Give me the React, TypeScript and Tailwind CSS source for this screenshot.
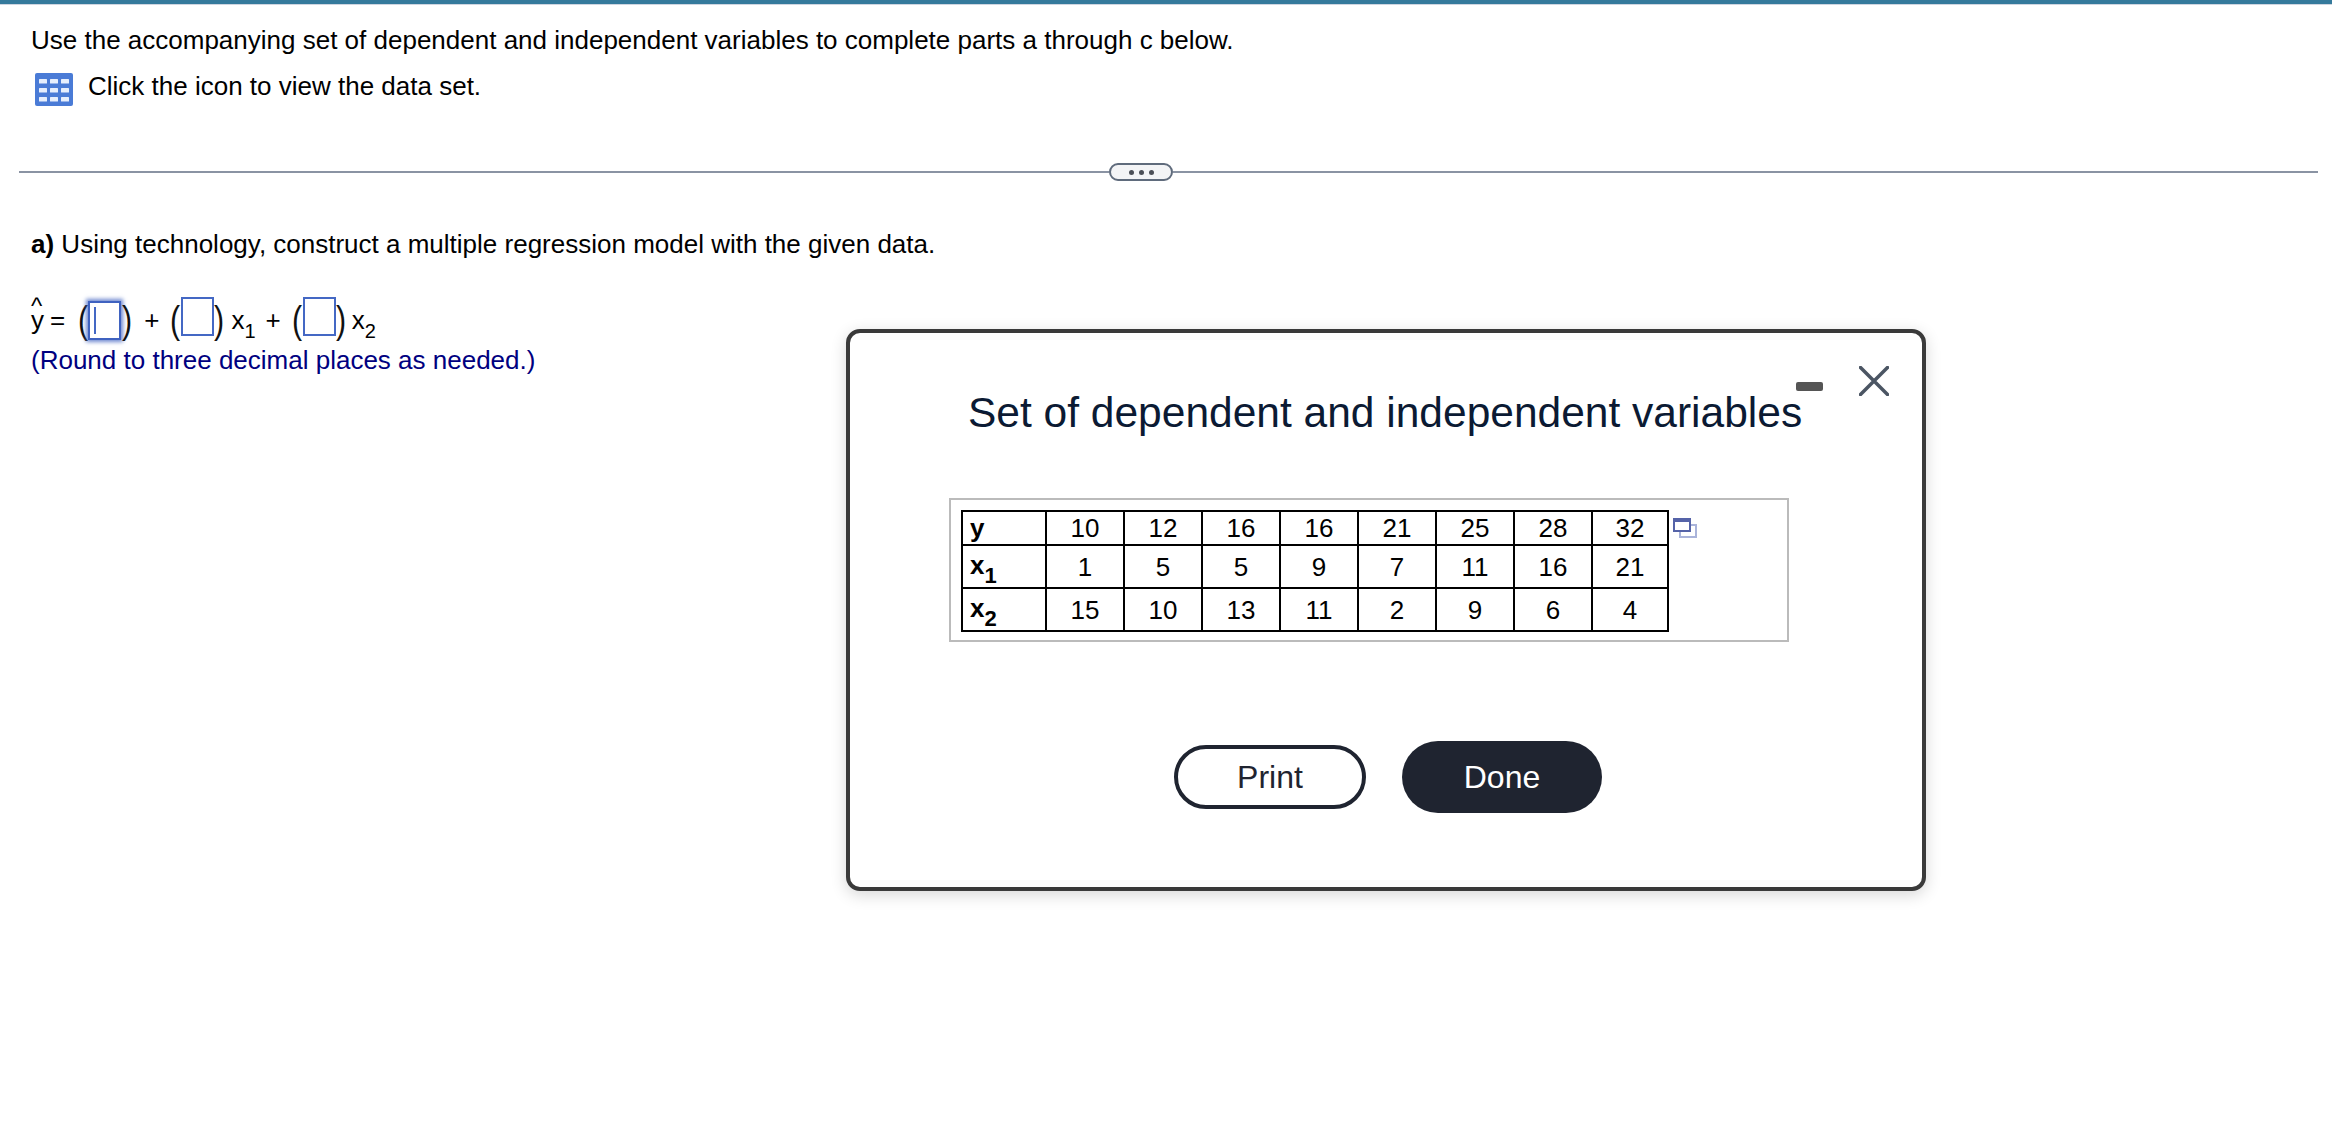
import React from "react";

const sans = "font-['Liberation_Sans',Arial,sans-serif]";

const rows = [
  { label: "y", sub: "", values: [10, 12, 16, 16, 21, 25, 28, 32], height: "h-[34px]" },
  { label: "x", sub: "1", values: [1, 5, 5, 9, 7, 11, 16, 21], height: "h-[43px]" },
  { label: "x", sub: "2", values: [15, 10, 13, 11, 2, 9, 6, 4], height: "h-[43px]" },
];

function GridIcon() {
  return (
    <svg width="38" height="33" viewBox="0 0 38 33" className="shrink-0">
      <rect x="0" y="0" width="38" height="33" rx="2" fill="#4a7bd6" />
      {[6, 15, 24].map((y) =>
        [4, 15, 26].map((x) => (
          <rect key={`${x}-${y}`} x={x} y={y} width="8" height="4.5" rx="0.5" fill="#e6eefc" />
        ))
      )}
    </svg>
  );
}

function WindowsIcon() {
  return (
    <svg width="24" height="20" viewBox="0 0 24 20" className="mt-[8px] ml-[4px] shrink-0">
      <rect x="7" y="7" width="16" height="12" fill="#fff" stroke="#aab4da" strokeWidth="2" />
      <rect x="1" y="1" width="16" height="12" fill="#fff" stroke="#5563a8" strokeWidth="2" />
      <rect x="1" y="1" width="16" height="3" fill="#5563a8" />
    </svg>
  );
}

function AnswerBox({ active }: { active?: boolean }) {
  return (
    <span
      className={
        active
          ? "relative inline-block w-[33px] h-[39px] border-2 border-[#3f62c0] bg-white shadow-[0_0_4px_2px_rgba(63,98,192,0.75)]"
          : "inline-block w-[33px] h-[39px] border-2 border-[#4468c4] bg-white"
      }
    >
      {active && <span className="absolute left-[4px] top-[4px] w-[2px] h-[27px] bg-[#4468c4]" />}
    </span>
  );
}

function Paren({ children }: { children: string }) {
  return (
    <span className="w-[10px] flex justify-center text-[38px] leading-[40px] font-light text-[#111] scale-x-[0.8]">
      {children}
    </span>
  );
}

export default function App() {
  return (
    <div className={`relative w-[2332px] h-[1122px] overflow-hidden bg-white text-black ${sans}`}>
      {/* Top rule */}
      <div className="h-[4px] bg-[#357a9c]" />
      <div className="h-[1px] bg-[#cfd5e0]" />

      {/* Question intro */}
      <div className="pl-[31px] pt-[19px] text-[26px] leading-[32px]">
        Use the accompanying set of dependent and independent variables to complete parts a through c below.
      </div>
      <div className="pl-[35px] pt-[17px] flex items-start gap-[15px] text-[26px] leading-[32px]">
        <GridIcon />
        <span className="mt-[-3px]">Click the icon to view the data set.</span>
      </div>

      {/* Divider */}
      <div className="mt-[57px] ml-[19px] mr-[14px] flex items-center">
        <div className="h-[2px] bg-[#8a93a3] w-[1090px] shrink-0" />
        <div className="w-[64px] h-[18px] rounded-full border-2 border-[#5f6b7c] bg-[#f3f4f6] flex items-center justify-center gap-[5px] shrink-0">
          <span className="w-[5px] h-[5px] rounded-full bg-[#4b4f57]" />
          <span className="w-[5px] h-[5px] rounded-full bg-[#4b4f57]" />
          <span className="w-[5px] h-[5px] rounded-full bg-[#4b4f57]" />
        </div>
        <div className="flex-1 h-[2px] bg-[#8a93a3]" />
      </div>

      {/* Part a */}
      <div className="pl-[31px] pt-[47px] text-[26px] leading-[32px]">
        <b>a)</b> Using technology, construct a multiple regression model with the given data.
      </div>
      <div className="pl-[31px] mt-[37px] h-[46px] flex items-center text-[26px] leading-[32px]">
        <span className="relative">
          y<span className="absolute left-[0px] top-[-4px] text-[24px] leading-[12px]">^</span>
        </span>
        <span className="ml-[6px]">=</span>
        <span className="ml-[13px]">
          <Paren>(</Paren>
        </span>
        <AnswerBox active />
        <span className="ml-[1px]">
          <Paren>)</Paren>
        </span>
        <span className="ml-[12px]">+</span>
        <span className="ml-[11px]">
          <Paren>(</Paren>
        </span>
        <span className="ml-[1px]">
          <AnswerBox />
        </span>
        <Paren>)</Paren>
        <span className="ml-[7px]">
          x<sub className="text-[20px] align-[-4px] leading-none">1</sub>
        </span>
        <span className="ml-[10px]">+</span>
        <span className="ml-[11px]">
          <Paren>(</Paren>
        </span>
        <span className="ml-[1px]">
          <AnswerBox />
        </span>
        <Paren>)</Paren>
        <span className="ml-[6px]">
          x<sub className="text-[20px] align-[-4px] leading-none">2</sub>
        </span>
      </div>
      <div className="pl-[31px] mt-[1px] text-[26px] leading-[32px] text-[#000080]">
        (Round to three decimal places as needed.)
      </div>

      {/* Data set dialog */}
      <div className="absolute left-[846px] top-[329px] w-[1080px] h-[562px] bg-white border-4 border-[#3a3a3a] rounded-[14px] shadow-[0_4px_16px_rgba(0,0,0,0.16)]">
        <div className="absolute left-[946px] top-[49px] w-[27px] h-[9px] rounded-[2px] bg-[#555555]" />
        <svg width="30" height="30" viewBox="0 0 30 30" className="absolute left-[1009px] top-[33px]">
          <path d="M1.5 1.5 L28.5 28.5 M28.5 1.5 L1.5 28.5" stroke="#4b5563" strokeWidth="3.5" fill="none" strokeLinecap="round" />
        </svg>

        <h2 className="pl-[118px] pt-[52px] text-[42.5px] leading-[56px] text-[#0b1a33]">
          Set of dependent and independent variables
        </h2>

        <div className="ml-[99px] mt-[57px] w-[840px] h-[144px] border-2 border-[#bbbbbb] pl-[10px] pt-[10px] flex items-start">
          <table className="border-collapse border-2 border-black text-[26px] table-fixed w-[706px]">
            <tbody>
              {rows.map((row) => (
                <tr key={row.label + row.sub} className={row.height}>
                  <td className="w-[84px] border-2 border-black pl-[7px] font-bold leading-none">
                    {row.label}
                    {row.sub && <sub className="text-[22px] align-[-4px] leading-none">{row.sub}</sub>}
                  </td>
                  {row.values.map((v, i) => (
                    <td
                      key={i}
                      className={
                        i === 7
                          ? "w-[76px] border-2 border-black text-center p-0 leading-none"
                          : "w-[78px] border-2 border-black text-center p-0 leading-none"
                      }
                    >
                      {v}
                    </td>
                  ))}
                </tr>
              ))}
            </tbody>
          </table>
          <WindowsIcon />
        </div>

        <div className="mt-[99px] pl-[4px] flex items-center justify-center gap-[36px] text-[32px]">
          <button className="w-[192px] h-[64px] rounded-full border-4 border-[#1f2430] text-[#1f2430] bg-white">
            Print
          </button>
          <button className="w-[200px] h-[72px] rounded-full bg-[#1f2430] text-white">Done</button>
        </div>
      </div>
    </div>
  );
}
